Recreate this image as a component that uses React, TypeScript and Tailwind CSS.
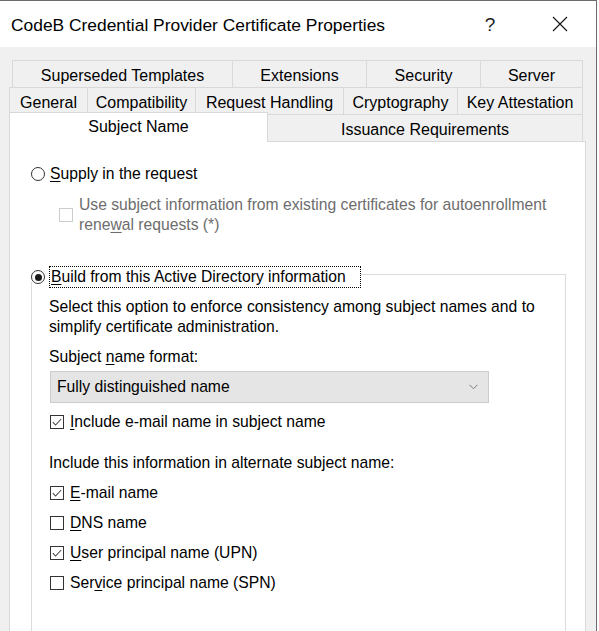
import React from "react";

const CheckMark = () => (
  <svg width="12" height="12" viewBox="0 0 12 12">
    <path d="M1.8 6.2 L4.6 9 L10.2 3" fill="none" stroke="#444444" strokeWidth="1.05" />
  </svg>
);

function CheckBox({ checked, disabled }: { checked?: boolean; disabled?: boolean }) {
  return (
    <span
      className={`w-[14px] h-[14px] border ${
        disabled ? "border-[#cccccc]" : "border-[#333333]"
      } bg-white flex items-center justify-center shrink-0`}
    >
      {checked ? <CheckMark /> : null}
    </span>
  );
}

function Radio({ checked }: { checked?: boolean }) {
  return (
    <span className="w-[14px] h-[14px] rounded-full border border-[#333333] bg-white flex items-center justify-center shrink-0">
      {checked ? <span className="w-[7px] h-[7px] rounded-full bg-[#1a1a1a]" /> : null}
    </span>
  );
}

function Tab({ label, w }: { label: string; w: string }) {
  return (
    <div
      className={`${w} h-[28px] -ml-px first:ml-0 border border-[#d9d9d9] bg-[#f0f0f0] flex items-center justify-center pt-[3px] text-[16px] text-black`}
    >
      {label}
    </div>
  );
}

export default function App() {
  return (
    <div className="w-[599px] h-[631px] bg-white overflow-hidden font-['Liberation_Sans',Arial,sans-serif] text-black">
      <div className="w-[597px] h-[631px] border-t border-r border-[#6b6b6b] flex flex-col">
        {/* Title bar */}
        <div className="h-[46px] bg-white flex items-center shrink-0">
          <div className="pl-[11px] text-[17.4px] text-black flex-1 pt-[2px]">
            CodeB Credential Provider Certificate Properties
          </div>
          <div className="w-[20px] text-[19px] text-[#222] mr-[52px] pt-[2px] text-center">?</div>
          <svg width="16" height="16" viewBox="0 0 16 16" className="mr-[28px]">
            <path d="M1 1 L15 15 M15 1 L1 15" stroke="#111" strokeWidth="1.1" />
          </svg>
        </div>

        {/* Body */}
        <div className="flex-1 bg-[#f0f0f0] pt-[13px]">
          {/* Row 1 */}
          <div className="flex ml-[12px]">
            <Tab label="Superseded Templates" w="w-[221px]" />
            <Tab label="Extensions" w="w-[135px]" />
            <Tab label="Security" w="w-[115px]" />
            <Tab label="Server" w="w-[103px]" />
          </div>
          {/* Row 2 */}
          <div className="flex ml-[9px] -mt-px">
            <Tab label="General" w="w-[79px]" />
            <Tab label="Compatibility" w="w-[109px]" />
            <Tab label="Request Handling" w="w-[149px]" />
            <Tab label="Cryptography" w="w-[115px]" />
            <Tab label="Key Attestation" w="w-[126px]" />
          </div>
          {/* Row 3 */}
          <div className="flex items-start ml-[9px] -mt-px">
            <div className="relative z-10 w-[259px] h-[30px] -mt-[2px] border border-b-0 border-[#d9d9d9] bg-white flex items-center justify-center pb-[2px] text-[16px]">
              Subject Name
            </div>
            <div className="w-[316px] h-[28px] -ml-px border border-[#d9d9d9] bg-[#f0f0f0] flex items-center justify-center pt-[3px] text-[16px]">
              Issuance Requirements
            </div>
          </div>

          {/* Panel */}
          <div className="ml-[9px] w-[577px] h-[500px] -mt-px border border-[#d9d9d9] bg-white pl-[21px] pt-[22px] text-[15.7px]">
            <div className="flex items-center h-[20px]">
              <Radio />
              <span className="ml-[5px]">
                <u className="underline-offset-2">S</u>upply in the request
              </span>
            </div>

            <div className="flex items-center ml-[28px] mt-[11px]">
              <CheckBox disabled />
              <div className="ml-[6px] leading-[20px] text-[#6d6d6d]">
                Use subject information from existing certificates for autoenrollment
                <br />
                rene<u className="underline-offset-2">w</u>al requests (*)
              </div>
            </div>

            <fieldset className="mt-[31px] w-[535px] h-[400px] border border-[#dcdcdc] pl-[17px]">
              <legend className="-ml-[18px] h-[16px] pr-0">
                <div className="flex items-center h-[22px]">
                  <Radio checked />
                  <div className="ml-[4px] w-[312px] h-[22px] border border-dotted border-black flex items-center pl-px">
                    <span>
                      <u className="underline-offset-2">B</u>uild from this Active Directory information
                    </span>
                  </div>
                </div>
              </legend>

              <div className="mt-[15px] leading-[20px]">
                Select this option to enforce consistency among subject names and to
                <br />
                simplify certificate administration.
              </div>

              <div className="mt-[10px] leading-[20px]">
                Subject <u className="underline-offset-2">n</u>ame format:
              </div>

              <div className="mt-[4px] ml-px w-[439px] h-[32px] border border-[#cccccc] bg-[#e5e5e5] flex items-center pl-[6px] pr-[10px]">
                <span className="flex-1">Fully distinguished name</span>
                <svg width="9" height="6" viewBox="0 0 9 6">
                  <path d="M0.5 0.8 L4.5 4.8 L8.5 0.8" fill="none" stroke="#7a7a7a" strokeWidth="1" />
                </svg>
              </div>

              <div className="mt-[9px] ml-px flex items-center h-[20px]">
                <CheckBox checked />
                <span className="ml-[6px]">
                  <u className="underline-offset-2">I</u>nclude e-mail name in subject name
                </span>
              </div>

              <div className="mt-[21px] leading-[20px]">
                Include this information in alternate subject name:
              </div>

              <div className="mt-[10px] ml-px flex flex-col gap-[10px]">
                <div className="flex items-center h-[20px]">
                  <CheckBox checked />
                  <span className="ml-[6px]">
                    <u className="underline-offset-2">E</u>-mail name
                  </span>
                </div>
                <div className="flex items-center h-[20px]">
                  <CheckBox />
                  <span className="ml-[6px]">
                    <u className="underline-offset-2">D</u>NS name
                  </span>
                </div>
                <div className="flex items-center h-[20px]">
                  <CheckBox checked />
                  <span className="ml-[6px]">
                    <u className="underline-offset-2">U</u>ser principal name (UPN)
                  </span>
                </div>
                <div className="flex items-center h-[20px]">
                  <CheckBox />
                  <span className="ml-[6px]">
                    Ser<u className="underline-offset-2">v</u>ice principal name (SPN)
                  </span>
                </div>
              </div>
            </fieldset>
          </div>
        </div>
      </div>
    </div>
  );
}
